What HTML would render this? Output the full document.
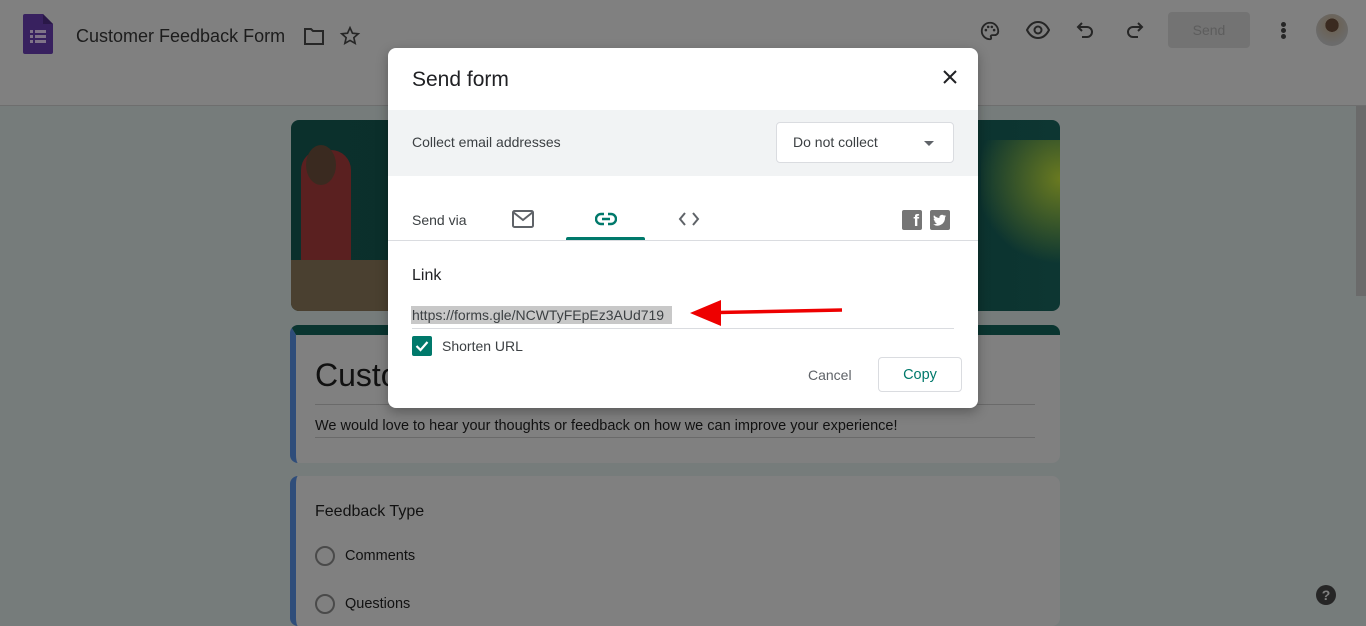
<!DOCTYPE html>
<html style="background:#767c7b;color-scheme:only light"><head><meta charset="utf-8"><meta name="color-scheme" content="only light"><style>
*{margin:0;padding:0;box-sizing:border-box}
body{width:1366px;height:619px;overflow:hidden;background:#767c7b;font-family:"Liberation Sans",Arial,sans-serif;position:relative}
.abs{position:absolute}
.hdr{left:0;top:0;width:1366px;height:106px;background:#808080;border-bottom:1px solid #6e6e6e}
.card{background:#808080;border-radius:8px}
.t{color:#1a1a1a}
</style></head><body>
<div class="abs hdr"></div>
<svg class="abs" style="left:23px;top:14px" width="30" height="40" viewBox="0 0 30 40"><path d="M2 0h18l10 10v28a2 2 0 0 1-2 2H2a2 2 0 0 1-2-2V2a2 2 0 0 1 2-2z" fill="#38215f"/><path d="M20 0v10h10z" fill="#2a1848"/><g fill="#7f7388"><rect x="7" y="16" width="3" height="3"/><rect x="7" y="21" width="3" height="3"/><rect x="7" y="26" width="3" height="3"/><rect x="12" y="16" width="11" height="3"/><rect x="12" y="21" width="11" height="3"/><rect x="12" y="26" width="11" height="3"/></g></svg>
<div class="abs t" style="left:76px;top:26px;font-size:18px;color:#1c1c1c">Customer Feedback Form</div>
<svg class="abs" style="left:304px;top:27px" width="20" height="18" viewBox="0 0 20 18"><path d="M1 2h6l2 2h10v13H1z" fill="none" stroke="#262626" stroke-width="2"/></svg>
<svg class="abs" style="left:339px;top:25px" width="22" height="22" viewBox="0 0 24 24"><path d="M12 3l2.7 6 6.3.6-4.8 4.2 1.4 6.2L12 16.8 6.4 20l1.4-6.2L3 9.6l6.3-.6z" fill="none" stroke="#262626" stroke-width="1.8"/></svg>
<svg class="abs" style="left:979px;top:20px" width="22" height="22" viewBox="0 0 24 24"><path d="M12 3a9 9 0 0 0 0 18c1.5 0 1.5-1.5 1-2.5-.5-1 0-2 1.5-2H17a4 4 0 0 0 4-4C21 7 17 3 12 3z" fill="none" stroke="#262626" stroke-width="2"/><circle cx="7.5" cy="11" r="1.4" fill="#262626"/><circle cx="10" cy="7.5" r="1.4" fill="#262626"/><circle cx="14" cy="7.5" r="1.4" fill="#262626"/><circle cx="16.5" cy="11" r="1.4" fill="#262626"/></svg>
<svg class="abs" style="left:1026px;top:20px" width="24" height="20" viewBox="0 0 24 20"><path d="M1 10C4 4 8 2 12 2s8 2 11 8c-3 6-7 8-11 8S4 16 1 10z" fill="none" stroke="#262626" stroke-width="2"/><circle cx="12" cy="10" r="3.5" fill="none" stroke="#262626" stroke-width="2"/></svg>
<svg class="abs" style="left:1076px;top:21px" width="20" height="20" viewBox="0 0 20 20"><path d="M6 2L2 6l4 4M2 6h9a5 5 0 0 1 0 10H6" fill="none" stroke="#262626" stroke-width="2"/></svg>
<svg class="abs" style="left:1124px;top:21px" width="20" height="20" viewBox="0 0 20 20"><path d="M14 2l4 4-4 4M18 6H9a5 5 0 0 0 0 10h5" fill="none" stroke="#262626" stroke-width="2"/></svg>
<div class="abs" style="left:1168px;top:12px;width:82px;height:36px;background:#737373;border-radius:4px;color:#5d5d5d;font-size:14px;text-align:center;line-height:36px">Send</div>
<div class="abs" style="left:1281px;top:22px;width:5px;height:5px;border-radius:50%;background:#262626;box-shadow:0 6px 0 #262626,0 12px 0 #262626"></div>
<div class="abs" style="left:1316px;top:14px;width:32px;height:32px;border-radius:50%;background:radial-gradient(circle at 50% 35%,#3a2a20 0 25%,#6b6358 26%,#6b6b6b 70%)"></div>
<div class="abs" style="left:1356px;top:106px;width:10px;height:190px;background:#6a6a6a"></div>
<div class="abs" style="left:291px;top:120px;width:769px;height:191px;border-radius:8px;background:linear-gradient(90deg,#0b302c,#0a2c28 60%,#0d3632);overflow:hidden">
 <div class="abs" style="left:10px;top:30px;width:50px;height:160px;background:#5a2020;border-radius:20px 20px 0 0"></div>
 <div class="abs" style="left:15px;top:25px;width:30px;height:40px;background:#3a2a20;border-radius:50%"></div>
 <div class="abs" style="left:0;top:140px;width:100px;height:51px;background:#4a4030"></div>
 <div class="abs" style="left:690px;top:20px;width:80px;height:130px;background:radial-gradient(circle at 100% 30%,#6a7a20,transparent 70%)"></div>
</div>
<div class="abs card" style="left:290px;top:325px;width:770px;height:138px;border-top:10px solid #0a3530;border-left:6px solid #2f4d7a"></div>
<div class="abs t" style="left:315px;top:357px;font-size:32px;color:#111">Custo</div>
<div class="abs" style="left:315px;top:404px;width:720px;height:1px;background:#6a6a6a"></div>
<div class="abs t" style="left:315px;top:418px;font-size:14.5px;color:#111">We would love to hear your thoughts or feedback on how we can improve your experience!</div>
<div class="abs" style="left:315px;top:437px;width:720px;height:1px;background:#6a6a6a"></div>
<div class="abs card" style="left:290px;top:476px;width:770px;height:150px;border-left:6px solid #2f4d7a"></div>
<div class="abs t" style="left:315px;top:503px;font-size:16px;color:#111">Feedback Type</div>
<div class="abs" style="left:315px;top:546px;width:20px;height:20px;border:2px solid #4a4a4a;border-radius:50%"></div>
<div class="abs t" style="left:345px;top:548px;font-size:14.5px;color:#111">Comments</div>
<div class="abs" style="left:315px;top:594px;width:20px;height:20px;border:2px solid #4a4a4a;border-radius:50%"></div>
<div class="abs t" style="left:345px;top:596px;font-size:14.5px;color:#111">Questions</div>
<div class="abs" style="left:1316px;top:585px;width:20px;height:20px;border-radius:50%;background:#262626;color:#808080;font-size:14px;font-weight:bold;text-align:center;line-height:20px">?</div>
<div class="abs" style="left:388px;top:48px;width:590px;height:360px;background:#fff;border-radius:8px;overflow:hidden;box-shadow:0 4px 12px rgba(0,0,0,.3)">
 <div class="abs" style="left:24px;top:20px;font-size:21px;color:#202124">Send form</div>
 <svg class="abs" style="left:554px;top:21px" width="16" height="16" viewBox="0 0 16 16"><path d="M2 2l12 12M14 2L2 14" stroke="#202124" stroke-width="2"/></svg>
 <div class="abs" style="left:0;top:62px;width:590px;height:66px;background:#f1f3f4"></div>
 <div class="abs" style="left:24px;top:86px;font-size:14px;color:#3c4043">Collect email addresses</div>
 <div class="abs" style="left:388px;top:74px;width:178px;height:41px;background:#fff;border:1px solid #dadce0;border-radius:4px"></div>
 <div class="abs" style="left:405px;top:86px;font-size:14px;color:#3c4043">Do not collect</div>
 <div class="abs" style="left:536px;top:93px;width:0;height:0;border-left:5px solid transparent;border-right:5px solid transparent;border-top:5px solid #5f6368"></div>
 <div class="abs" style="left:24px;top:164px;font-size:14px;color:#3c4043">Send via</div>
 <svg class="abs" style="left:124px;top:162px" width="22" height="18" viewBox="0 0 22 18"><rect x="1" y="1" width="20" height="16" rx="1.5" fill="none" stroke="#5f6368" stroke-width="2"/><path d="M1 2l10 8 10-8" fill="none" stroke="#5f6368" stroke-width="2"/></svg>
 <svg class="abs" style="left:207px;top:164px" width="22" height="14" viewBox="0 0 22 14"><path d="M9 2H6a5 5 0 0 0 0 10h3M13 2h3a5 5 0 0 1 0 10h-3M7 7h8" fill="none" stroke="#00796b" stroke-width="2.4"/></svg>
 <svg class="abs" style="left:290px;top:163px" width="22" height="16" viewBox="0 0 22 16"><path d="M7 2L2 8l5 6M15 2l5 6-5 6" fill="none" stroke="#5f6368" stroke-width="2"/></svg>
 <div class="abs" style="left:178px;top:189px;width:79px;height:3px;background:#00796b;border-radius:2px 2px 0 0"></div>
 <div class="abs" style="left:0;top:192px;width:590px;height:1px;background:#dadce0"></div>
 <div class="abs" style="left:514px;top:162px;width:20px;height:20px;background:#757575;border-radius:2px;color:#fff;font-weight:bold;font-size:17px;text-align:right;padding-right:3px;line-height:22px">f</div>
 <svg class="abs" style="left:542px;top:162px" width="20" height="20" viewBox="0 0 20 20"><rect width="20" height="20" rx="2" fill="#757575"/><path d="M16 6c-.5.2-1 .4-1.5.4.6-.3 1-.8 1.2-1.4-.5.3-1.1.5-1.7.6a2.7 2.7 0 0 0-4.6 2.4C7.2 7.9 5.3 6.9 4 5.3c-.8 1.3-.3 2.9.8 3.6-.4 0-.8-.1-1.2-.3 0 1.3.9 2.4 2.1 2.7-.4.1-.8.1-1.2 0 .3 1.1 1.4 1.9 2.5 1.9A5.5 5.5 0 0 1 3 14.3 7.7 7.7 0 0 0 15 7.5z" fill="#fff"/></svg>
 <div class="abs" style="left:24px;top:219px;font-size:16px;color:#202124">Link</div>
 <div class="abs" style="left:23px;top:258px;width:261px;height:18px;background:#c8c8c8"></div>
 <div class="abs" style="left:24px;top:259px;font-size:14px;color:#3c4043">https://forms.gle/NCWTyFEpEz3AUd719</div>
 <div class="abs" style="left:24px;top:280px;width:542px;height:1px;background:#dadce0"></div>
 <svg class="abs" style="left:300px;top:250px" width="156" height="30" viewBox="0 0 156 30"><path d="M30 14.5L154 12" stroke="#e00" stroke-width="3.5"/><path d="M2 15L33 2v26z" fill="#e00"/></svg>
 <div class="abs" style="left:24px;top:288px;width:20px;height:20px;background:#00796b;border-radius:2px"></div>
 <svg class="abs" style="left:24px;top:288px" width="20" height="20" viewBox="0 0 20 20"><path d="M4.5 10l4 4 7-8" fill="none" stroke="#fff" stroke-width="2.2"/></svg>
 <div class="abs" style="left:54px;top:290px;font-size:14px;color:#3c4043">Shorten URL</div>
 <div class="abs" style="left:420px;top:319px;font-size:14px;color:#5f6368">Cancel</div>
 <div class="abs" style="left:490px;top:309px;width:84px;height:35px;border:1px solid #dadce0;border-radius:4px;color:#00796b;font-size:14.5px;text-align:center;line-height:35px">Copy</div>
</div>
</body></html>
